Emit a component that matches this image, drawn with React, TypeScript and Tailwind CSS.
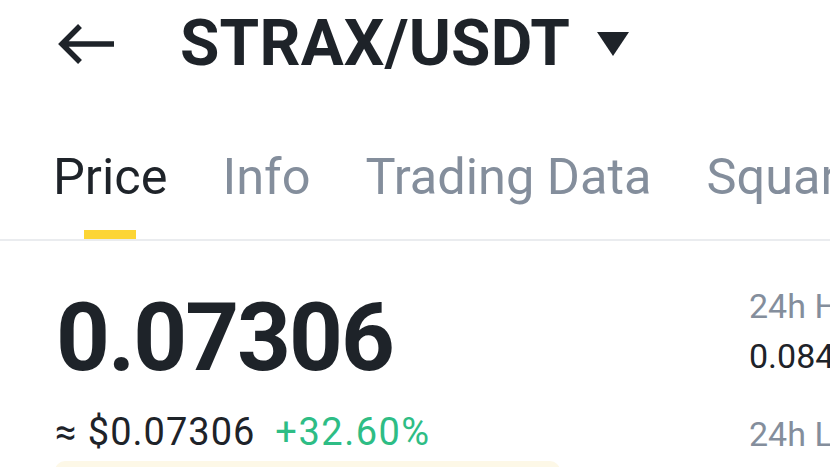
import React from "react";

const tabs = ["Price", "Info", "Trading Data", "Square"];

export default function App() {
  return (
    <div className="w-[830px] h-[467px] overflow-hidden bg-white text-[#1e2329] font-['Roboto',sans-serif]">
      {/* header */}
      <div className="flex items-center h-[88px] pl-[58px]">
        <svg width="58" height="40" viewBox="0 0 58 40" fill="none">
          <path d="M56 20H5M22 2L4 20l18 18" stroke="#1e2329" strokeWidth="5.5" />
        </svg>
        <div className="ml-[64px] text-[64px] font-bold leading-none tracking-[0.2px]">STRAX/USDT</div>
        <svg className="ml-[26px]" width="34" height="26" viewBox="0 0 34 26">
          <path d="M1 1h32L17 25z" fill="#1e2329" />
        </svg>
      </div>

      {/* tabs */}
      <div className="flex gap-[55px] pl-[53px] mt-[64px] border-b-2 border-[#eaecef] whitespace-nowrap">
        {tabs.map((t, i) => (
          <div key={t} className="flex flex-col items-center shrink-0">
            <span
              className={
                "text-[50.5px] leading-none " +
                (i === 0 ? "text-[#1e2329]" : "text-[#848e9c]")
              }
            >
              {t}
            </span>
            <div className={"mt-[27px] h-[9px] w-[52px] " + (i === 0 ? "bg-[#fcd535]" : "bg-transparent")} />
          </div>
        ))}
      </div>

      {/* price */}
      <div className="flex pl-[55px] pt-[50px]">
        <div className="w-[505px] shrink-0">
          <div className="text-[94px] font-bold leading-none tracking-[-2px] ml-[1px]">0.07306</div>
          <div className="mt-[28px] flex items-baseline text-[38px] leading-none">
            <span className="tracking-[1px]">≈ $0.07306</span>
            <span className="ml-[20px] tracking-[1.5px] text-[#2ebd85]">+32.60%</span>
          </div>
          <div className="mt-[10px] h-[40px] rounded-[10px] bg-[#fdf8e7]" />
        </div>
        <div className="ml-[189px] shrink-0 -mt-[2px] text-[34px] leading-none whitespace-nowrap">
          <div className="text-[#848e9c]">24h High</div>
          <div className="mt-[16px]">0.08450</div>
          <div className="mt-[44px] text-[#848e9c]">24h Low</div>
        </div>
      </div>
    </div>
  );
}
